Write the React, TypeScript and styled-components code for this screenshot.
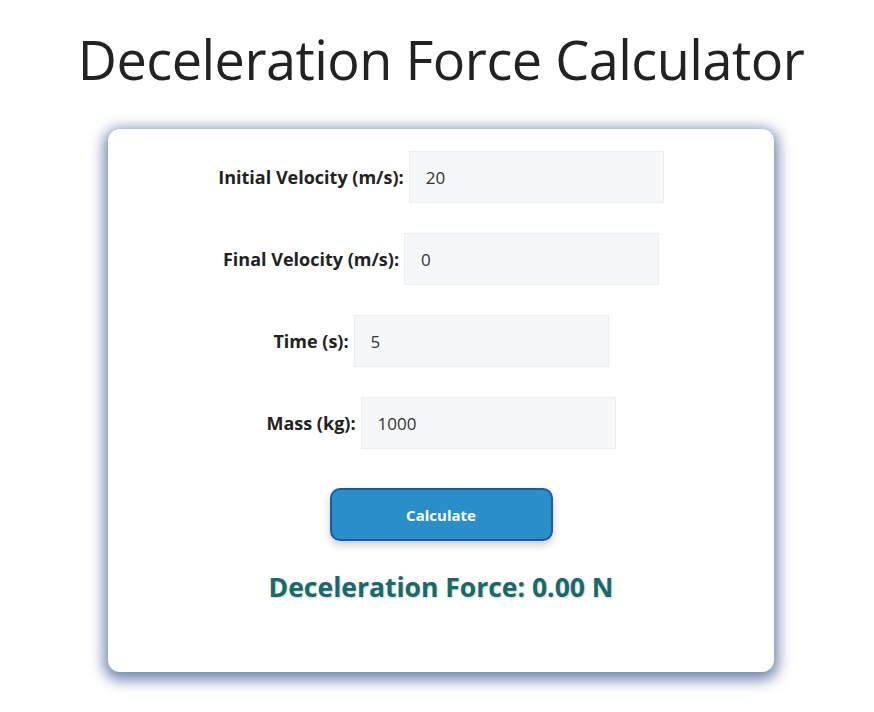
import React, { useState } from "react";
import styled, { createGlobalStyle } from "styled-components";

const Global = createGlobalStyle`
  html, body { margin: 0; padding: 0; background: #ffffff; }
  body { font-family: "Open Sans", "Noto Sans", sans-serif; color: #222; }
`;

const Page = styled.div`
  display: flex;
  flex-direction: column;
  align-items: center;
  padding: 18px 0 30px 8px;
`;

const Title = styled.h1`
  margin: 0 0 29px;
  font-size: 54px;
  font-weight: 400;
  line-height: 82px;
  color: #222;
  letter-spacing: -0.5px;
`;

const Card = styled.div`
  width: 666px;
  box-sizing: border-box;
  background: #fff;
  border-radius: 12px;
  box-shadow: 0 4px 14px 4px rgba(60, 95, 145, 0.75);
  padding: 22px 20px 0;
  height: 543px;
  display: flex;
  flex-direction: column;
  align-items: center;
`;

const Row = styled.div`
  display: flex;
  align-items: center;
  justify-content: center;
  margin-bottom: 30px;
`;

const Label = styled.label`
  font-size: 18px;
  font-weight: 700;
  color: #222;
  margin-right: 5px;
`;

const Input = styled.input`
  width: 255px;
  height: 52px;
  box-sizing: border-box;
  border: 1px solid #eceef0;
  background: #f6f7f9;
  padding: 0 16px;
  font-family: inherit;
  font-size: 17px;
  color: #333;
  outline: none;
`;

const Button = styled.button`
  margin-top: 9px;
  width: 223px;
  height: 53px;
  border-radius: 10px;
  border: 2px solid #1a5ba6;
  background: #2a8fc9;
  color: #fff;
  font-family: inherit;
  font-weight: 700;
  font-size: 15px;
  box-shadow: 0 4px 8px rgba(0, 0, 0, 0.2);
  cursor: pointer;
`;

const Result = styled.div`
  margin-top: 28px;
  font-size: 26.5px;
  font-weight: 700;
  color: #176a6a;
  text-shadow: 1px 1px 2px rgba(0, 0, 0, 0.2);
`;

const fields = [
  { label: "Initial Velocity (m/s):", value: "20" },
  { label: "Final Velocity (m/s):", value: "0" },
  { label: "Time (s):", value: "5" },
  { label: "Mass (kg):", value: "1000" },
];

export default function App() {
  const [vals, setVals] = useState(fields.map((f) => f.value));
  return (
    <Page>
      <Global />
      <Title>Deceleration Force Calculator</Title>
      <Card>
        {fields.map((f, i) => (
          <Row key={f.label}>
            <Label>{f.label}</Label>
            <Input
              value={vals[i]}
              onChange={(e) => {
                const next = [...vals];
                next[i] = e.target.value;
                setVals(next);
              }}
            />
          </Row>
        ))}
        <Button>Calculate</Button>
        <Result>Deceleration Force: 0.00 N</Result>
      </Card>
    </Page>
  );
}
